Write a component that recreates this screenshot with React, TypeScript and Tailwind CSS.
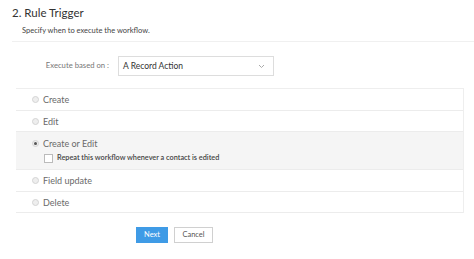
import React from 'react'

type Option = { label: string; selected?: boolean; h: string }

const options: Option[] = [
    { label: 'Create', h: 'h-[21px]' },
    { label: 'Edit', h: 'h-[20px]' },
    { label: 'Create or Edit', selected: true, h: 'h-[37px]' },
    { label: 'Field update', h: 'h-[21px]' },
    { label: 'Delete', h: 'h-[20px]' },
]

const Radio = ({ on }: { on?: boolean }) => (
    <span className="flex h-[7px] w-[7px] items-center justify-center rounded-full border border-[#d4d4d4] bg-[#eeeeee]">
        {on && <span className="h-[3px] w-[3px] rounded-full bg-[#555]" />}
    </span>
)

const App = () => {
    return (
        <div className="h-[259px] w-[474px] overflow-hidden bg-white font-['Lato',sans-serif]">
            <div className="pl-[12px] pt-[5px]">
                <h2 className="text-[11.5px] leading-[16px] text-[#333]">2. Rule Trigger</h2>
                <p className="mt-[5px] pl-[10px] text-[7.5px] leading-[10px] text-[#444]">Specify when to execute the workflow.</p>
                <div className="mt-[5px] h-px bg-[#f0f0f0]" />
            </div>

            <div className="mt-[14px] flex items-center">
                <span className="w-[118px] pr-[9px] text-right text-[7.7px] text-[#777]">Execute based on :</span>
                <div className="flex h-[20px] w-[156px] items-center justify-between border border-[#dddddd] pl-[4px] pr-[8px]">
                    <span className="text-[8.5px] text-[#333]">A Record Action</span>
                    <svg width="7" height="5" viewBox="0 0 7 5" fill="none">
                        <path d="M1 1l2.5 2.5L6 1" stroke="#aaa" strokeWidth="1" />
                    </svg>
                </div>
            </div>

            <div className="ml-[16px] mt-[12px] w-[448px] border-t border-r border-[#eeeeee]">
                {options.map((o) => (
                    <div key={o.label} className={`border-b border-[#ececec] ${o.selected ? 'bg-[#f5f5f5]' : ''}`}>
                        <div className={`flex flex-col justify-center pl-[16px] ${o.h}`}>
                            <div className="flex items-center gap-[4px]">
                                <Radio on={o.selected} />
                                <span className="text-[9px] leading-[11px] text-[#6a6a6a]">{o.label}</span>
                            </div>
                            {o.selected && (
                                <div className="mt-[4px] flex items-center gap-[4px] pl-[12px]">
                                    <span className="h-[9px] w-[9px] border border-[#bbb] bg-white" />
                                    <span className="text-[7.3px] font-semibold text-[#444]">Repeat this workflow whenever a contact is edited</span>
                                </div>
                            )}
                        </div>
                    </div>
                ))}
            </div>

            <div className="mt-[14px] flex gap-[6px] pl-[136px]">
                <button className="h-[16px] w-[32px] bg-[#3f9be6] text-[7.5px] text-white">Next</button>
                <button className="h-[16px] w-[39px] border border-[#d0d0d0] bg-white text-[7.5px] text-[#555]">Cancel</button>
            </div>
        </div>
    )
}

export default App
